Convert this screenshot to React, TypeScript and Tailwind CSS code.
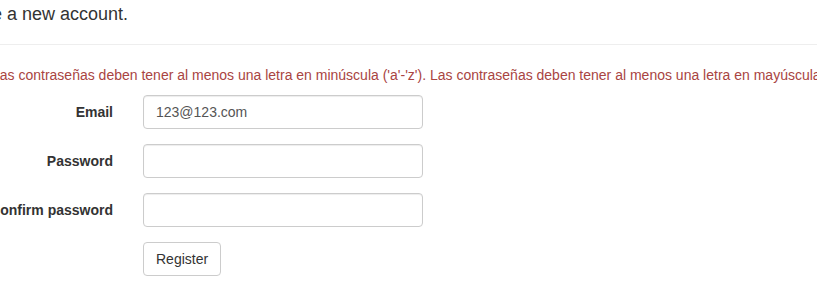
const fieldClass =
  "h-[34px] w-[280px] rounded-[4px] border border-[#cccccc] bg-white px-[12px] py-[6px] text-[14px] leading-[20px] text-[#555555] shadow-[inset_0_1px_1px_rgba(0,0,0,0.075)] outline-none";

function FormRow({ label, children }: { label: string; children: React.ReactNode }) {
  return (
    <div className="mb-[15px] flex">
      <div className="flex w-[128px] shrink-0 justify-end pr-[15px] pt-[7px]">
        <label className="whitespace-nowrap text-[14px] font-bold leading-[20px] text-[#333333]">{label}</label>
      </div>
      <div className="pl-[15px]">{children}</div>
    </div>
  );
}

export default function App() {
  return (
    <div
      className="h-[283px] w-full overflow-hidden bg-white text-[14px] text-[#333333]"
      style={{ fontFamily: '"Liberation Sans", Arial, Helvetica, sans-serif' }}
    >
      <h4 className="ml-[-52px] mt-[4px] whitespace-nowrap text-[18px] font-normal leading-[20px]">
        Create a new account.
      </h4>
      <hr className="mt-[20px] border-0 border-t border-[#eeeeee]" />
      <div className="ml-[-8px] mt-[20px] whitespace-nowrap leading-[20px] text-[#a94442]">
        Las contraseñas deben tener al menos una letra en minúscula ('a'-'z'). Las contraseñas deben tener al menos
        una letra en mayúscula ('A'-'Z').
      </div>
      <form className="mt-[10px]" onSubmit={(event) => event.preventDefault()}>
        <FormRow label="Email">
          <input className={fieldClass} type="email" defaultValue="123@123.com" />
        </FormRow>
        <FormRow label="Password">
          <input className={fieldClass} type="password" />
        </FormRow>
        <FormRow label="Confirm password">
          <input className={fieldClass} type="password" />
        </FormRow>
        <div className="flex">
          <div className="w-[128px] shrink-0" />
          <div className="pl-[15px]">
            <button
              type="submit"
              className="h-[34px] rounded-[4px] border border-[#cccccc] bg-white px-[12px] py-[6px] text-[14px] leading-[20px] text-[#333333]"
            >
              Register
            </button>
          </div>
        </div>
      </form>
    </div>
  );
}
